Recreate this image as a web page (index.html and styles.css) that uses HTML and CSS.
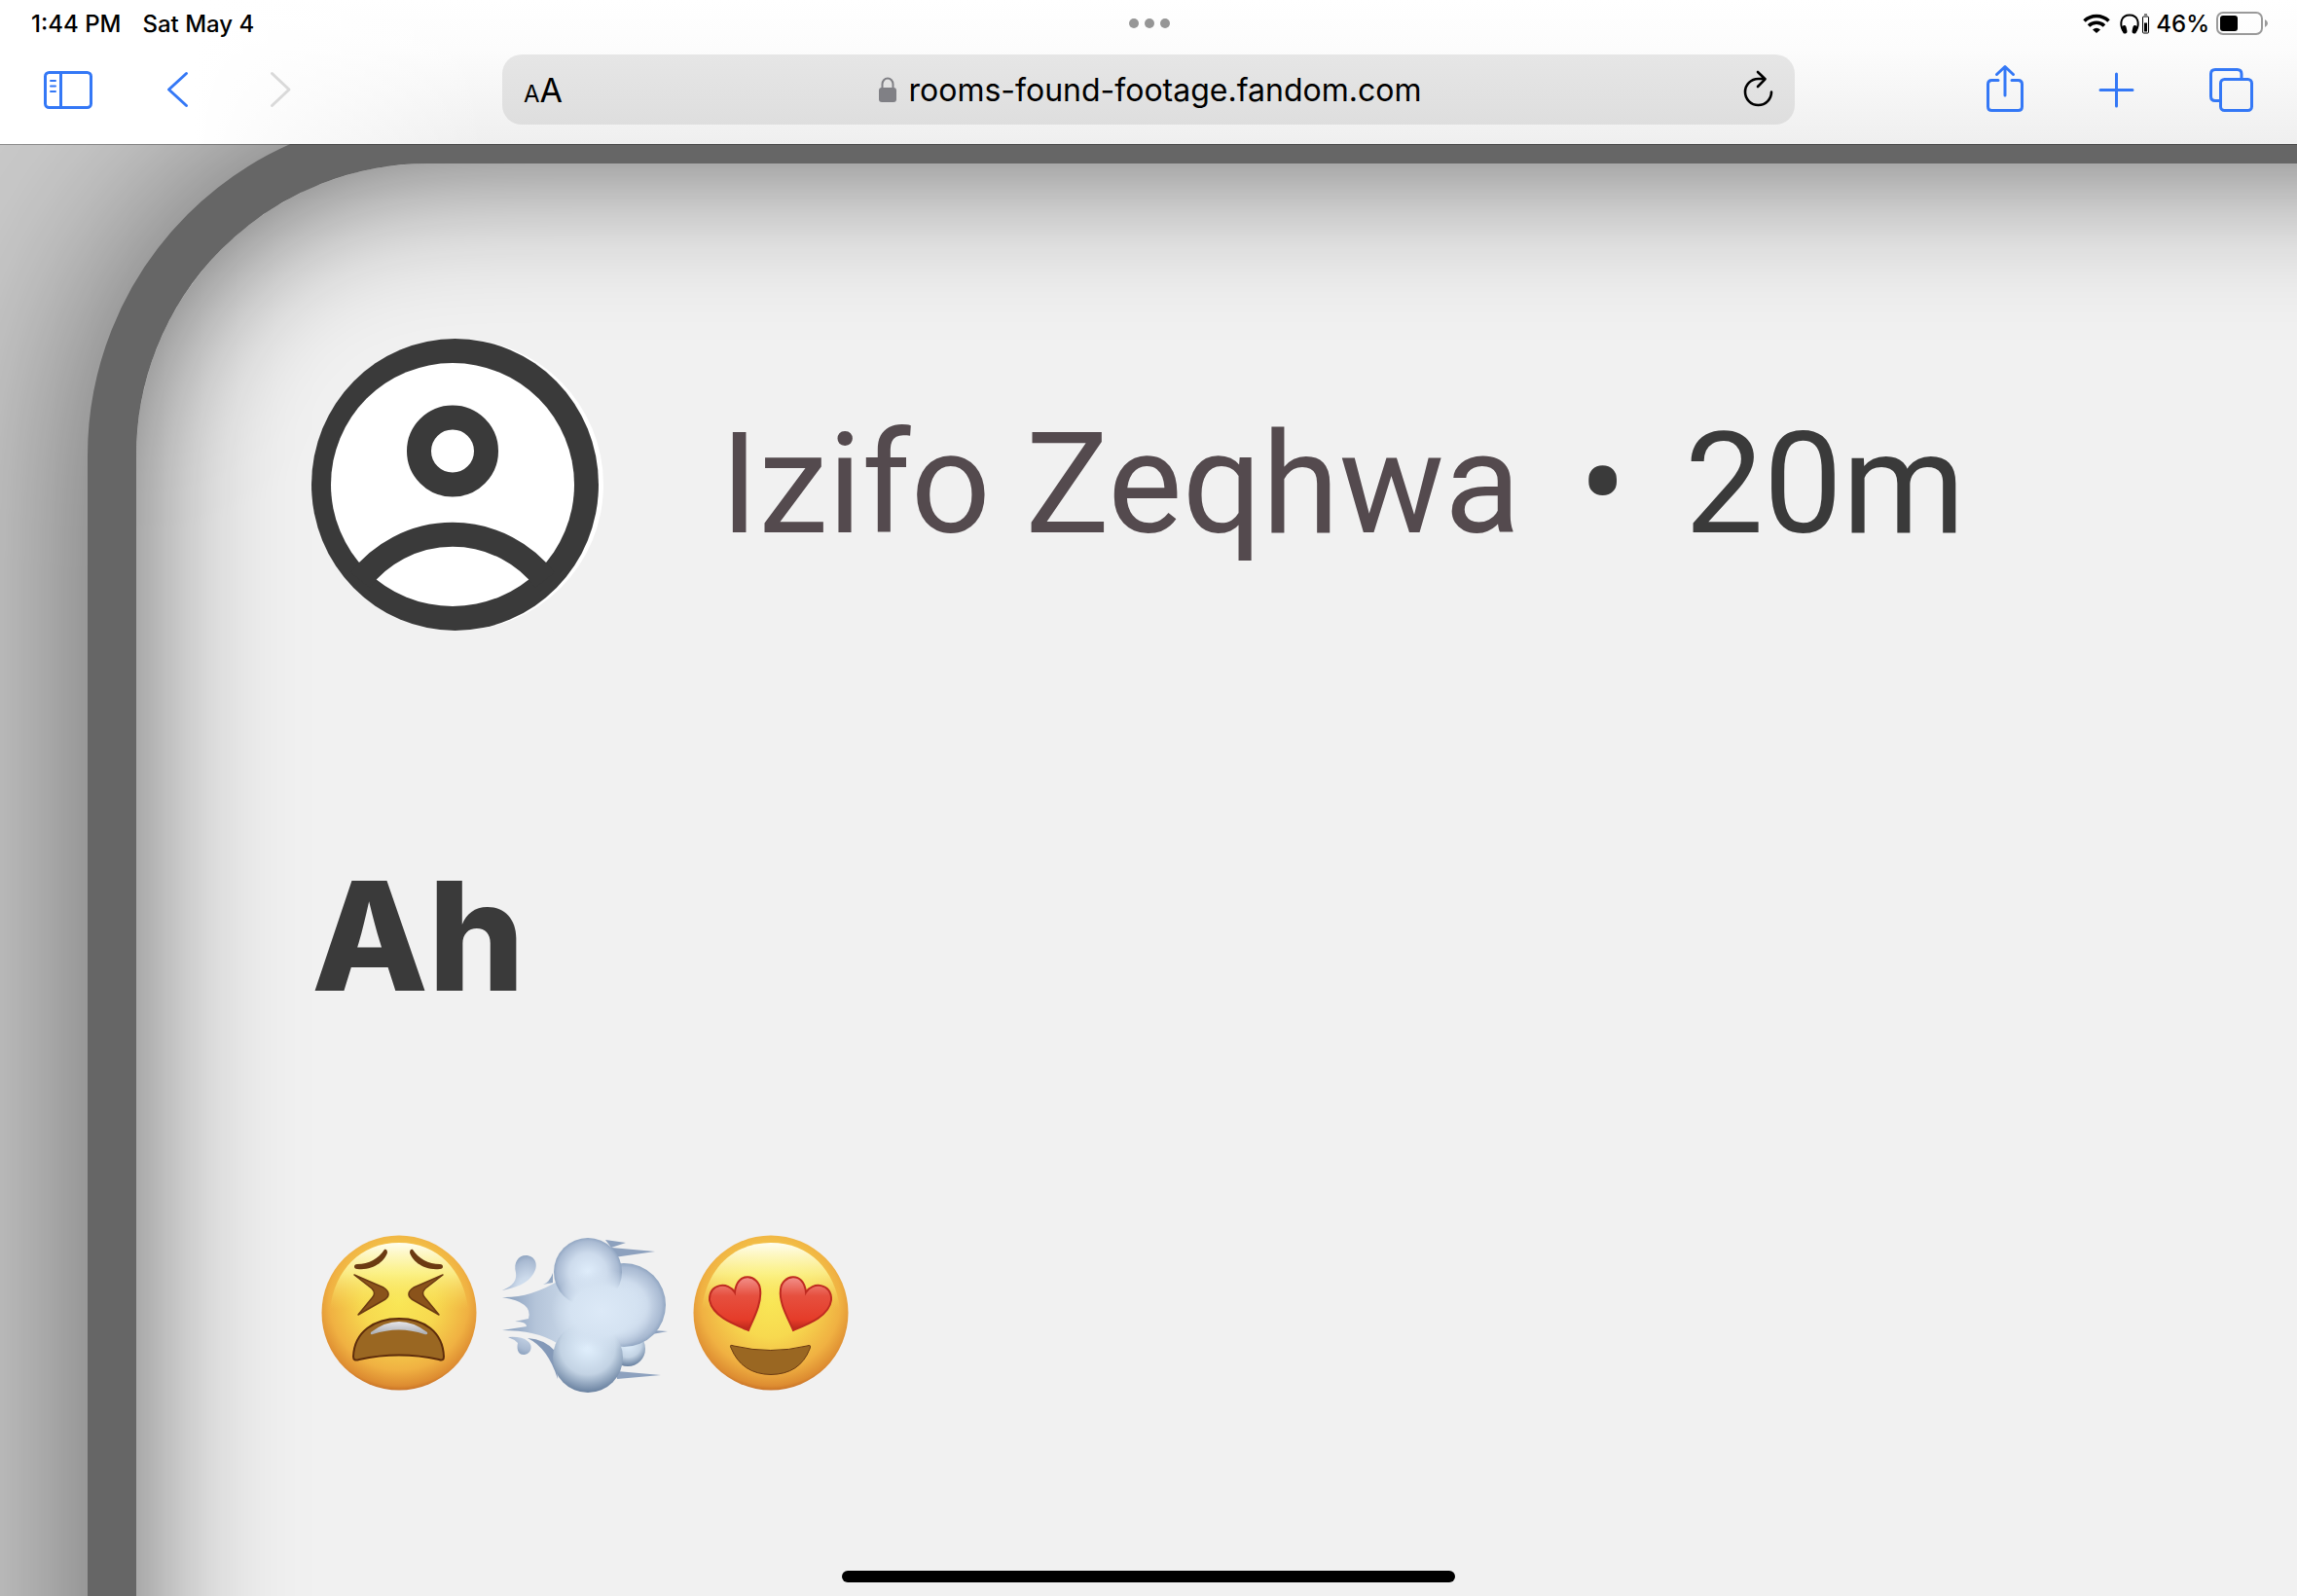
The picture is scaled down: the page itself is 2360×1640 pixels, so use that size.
FILE: index.html
```html
<!DOCTYPE html>
<html lang="en">
<head>
<meta charset="utf-8">
<title>rooms-found-footage.fandom.com</title>
<link rel="stylesheet" href="styles.css">
</head>
<body>
<header class="chrome">
  <div class="status">
    <div class="status-side">
      <span>1:44 PM</span>
      <span>Sat May 4</span>
    </div>
    <div class="dots" aria-hidden="true"><i></i><i></i><i></i></div>
    <div class="status-side status-right">
      <svg class="wifi" width="28" height="20" viewBox="0 0 28 20" aria-hidden="true">
        <g fill="none" stroke="#000" stroke-width="3.600">
          <path d="M1.500 7.500A18 18 0 0 1 26.500 7.500"/>
          <path d="M6 12.500A11.500 11.500 0 0 1 22 12.500"/>
        </g>
        <path d="M14 20L10 16.500Q14 13 18 16.500Z" fill="#000"/>
      </svg>
      <svg class="phones" width="31" height="21" viewBox="0 0 31 21" aria-hidden="true">
        <path d="M3.500 18C-1 10 1.500 1.500 10 1.500S21 10 16.500 18" fill="none" stroke="#000" stroke-width="2"/>
        <rect x="2.500" y="12" width="4.500" height="8.500" rx="2" transform="rotate(-12 5 16)"/>
        <rect x="13" y="12" width="4.500" height="8.500" rx="2" transform="rotate(12 15 16)"/>
        <rect x="23.500" y="3" width="6" height="17" rx="1" fill="none" stroke="#000"/>
        <path d="M25 9.500h3v9h-3zM25 .500h3v1h-3z"/>
      </svg>
      <span>46%</span>
      <svg class="battery" width="54" height="24" viewBox="0 0 54 24" aria-hidden="true">
        <rect x="2" y="1" width="46" height="22" rx="6" fill="none" stroke="#9a9a9a" stroke-width="2"/>
        <rect x="5" y="4" width="18" height="16" rx="3"/>
        <path d="M51 8q3 1.500 3 4t-3 4z" fill="#9a9a9a"/>
      </svg>
    </div>
  </div>
  <nav class="toolbar" aria-label="Browser">
    <div class="tools tools-left">
      <button class="tool" type="button" aria-label="Sidebar">
        <svg width="52" height="52" viewBox="0 0 52 52"><g class="line"><rect x="4.500" y="8.500" width="47" height="36" rx="4"/><path d="M20.500 9v35"/><path d="M10 17h5M10 22.500h5M10 28h5" stroke-width="2"/></g></svg>
      </button>
      <button class="tool" type="button" aria-label="Back">
        <svg width="52" height="52" viewBox="0 0 52 52"><path class="line" d="M37.500 9.500L19.500 26l18 16.500"/></svg>
      </button>
      <button class="tool" type="button" aria-label="Forward" disabled>
        <svg width="52" height="52" viewBox="0 0 52 52"><path class="line" d="M13.500 9.500l17.500 16.500-17.500 16.500"/></svg>
      </button>
    </div>
    <div class="address">
      <button class="reader" type="button" aria-label="Page settings"><span class="small-a">A</span>A</button>
      <div class="site">
        <svg width="20" height="27" viewBox="0 0 20 27" aria-hidden="true"><rect x="1" y="11" width="18" height="15" rx="3" fill="#808085"/><path d="M4.500 12V7.500a5.500 6 0 0 1 11 0V12" fill="none" stroke="#808085" stroke-width="2"/></svg>
        <a href="#post">rooms-found-footage.fandom.com</a>
      </div>
      <button class="reload" type="button" aria-label="Reload">
        <svg width="34" height="40" viewBox="0 0 34 40"><path d="M30 22.500a13.500 13.500 0 1 1-13.500-13.500h7M16 2l7.500 7.300-7.500 7.700" fill="none" stroke="#000" stroke-width="2.600" stroke-linecap="round" stroke-linejoin="round"/></svg>
      </button>
    </div>
    <div class="tools tools-right">
      <button class="tool" type="button" aria-label="Share">
        <svg width="52" height="52" viewBox="0 0 52 52"><path class="line" d="M19 16.500h-6.500q-4 0-4 4v23q0 4 4 4h27q4 0 4-4v-23q0-4-4-4H33M26 32V2.500M17.500 10.500l8.500-8 8.500 8"/></svg>
      </button>
      <button class="tool" type="button" aria-label="New tab">
        <svg width="52" height="52" viewBox="0 0 52 52"><path class="line" d="M24.500 10v33M8 26.500h33"/></svg>
      </button>
      <button class="tool" type="button" aria-label="Tabs">
        <svg width="52" height="52" viewBox="0 0 52 52"><g class="line"><rect x="15.500" y="15.500" width="32" height="32" rx="4"/><path d="M15 37.500h-5q-4.500 0-4.500-4.500V10q0-4.500 4.500-4.500h22.500q4.500 0 4.500 4.500v5"/></g></svg>
      </button>
    </div>
  </nav>
</header>
<main class="page">
  <article class="card" id="post">
    <header class="author">
      <svg class="avatar" width="300" height="300" viewBox="0 0 300 300" role="img" aria-label="Avatar">
        <circle cx="150" cy="150" r="150" fill="#fff"/>
        <ellipse cx="147.500" cy="150" rx="147.500" ry="150" fill="#3a3a3a"/>
        <circle cx="145" cy="150" r="125" fill="#fff"/>
        <circle cx="145" cy="115.500" r="34.500" fill="none" stroke="#3a3a3a" stroke-width="25"/>
        <path d="M50 248A120 120 0 0 1 240 248" fill="none" stroke="#3a3a3a" stroke-width="25"/>
      </svg>
      <a class="name" href="#post">Izifo Zeqhwa</a>
      <span class="dot">•</span>
      <time class="time">20m</time>
    </header>
    <h1 class="title">Ah</h1>
    <div class="emoji">
      <svg width="160" height="160" viewBox="0 0 160 160" role="img" aria-label="Tired face">
        <defs>
          <radialGradient id="face" cx=".5" cy=".42" r=".6"><stop offset="0" stop-color="#f9e756"/><stop offset=".4" stop-color="#f7d94f"/><stop offset=".75" stop-color="#f0b142"/><stop offset=".92" stop-color="#dd8c31"/><stop offset="1" stop-color="#bb611f"/></radialGradient>
          <linearGradient id="shine" x2="0" y2="1"><stop offset="0" stop-color="#fffef0"/><stop offset=".4" stop-color="#fcf692" stop-opacity=".8"/><stop offset=".85" stop-color="#f8e255" stop-opacity="0"/></linearGradient>
          <linearGradient id="teeth" x2="0" y2="1"><stop offset="0" stop-color="#e6e6ea"/><stop offset="1" stop-color="#a9abb1"/></linearGradient>
          <linearGradient id="heart" x2="0" y2="1"><stop offset="0" stop-color="#f2918b"/><stop offset=".35" stop-color="#e6503f"/><stop offset=".8" stop-color="#e53c29"/><stop offset="1" stop-color="#b9261a"/></linearGradient>
        </defs>
        <circle cx="80" cy="80" r="79.500" fill="url(#face)"/>
        <path d="M80 8C40 8 14 36 9 76 30 92 130 92 151 76 146 36 120 8 80 8Z" fill="url(#shine)"/>
        <g fill="#6b3a12">
          <path d="M65 15C59 24 49 30 37 30 33 30 33 35 37 35 54 37 66 26 68 18 68 15 66 14 65 15ZM94 15C100 24 110 30 122 30 126 30 126 35 122 35 105 37 93 26 91 18 91 15 93 14 94 15Z"/>
        </g>
        <path d="M34 41L64 54Q73 60 66 66L38 82 52 65Q57 60 52 55ZM125 41L95 54Q86 60 93 66L121 82 107 65Q102 60 107 55Z" fill="#8a531b" stroke="#6b3a12" stroke-width="1.500" stroke-linejoin="round"/>
        <path d="M33 125C34 99 55 86 80 86S125 99 126 125Q126 130 121 128 80 119 39 128 33 130 33 125Z" fill="#9a6722" stroke="#5d2c0b" stroke-width="2"/>
        <path d="M51 100Q80 78 109 100 110 103 106 102 80 93 53 102 50 103 51 100Z" fill="url(#teeth)"/>
      </svg>
      <svg width="170" height="163" viewBox="0 -3 170 163" role="img" aria-label="Dashing away">
        <defs>
          <radialGradient id="puff"><stop offset="0" stop-color="#dfedfb"/><stop offset=".55" stop-color="#cddbec"/><stop offset=".9" stop-color="#a9bad2"/><stop offset="1" stop-color="#91a6c2"/></radialGradient>
          <radialGradient id="puff-low" cy=".35" r=".65"><stop offset="0" stop-color="#e2f1fe"/><stop offset=".6" stop-color="#c3d3e4"/><stop offset="1" stop-color="#68809f"/></radialGradient>
          <radialGradient id="core"><stop offset="0" stop-color="#dce9f7"/><stop offset=".6" stop-color="#d5e3f2"/><stop offset="1" stop-color="#d0deee" stop-opacity="0"/></radialGradient>
          <linearGradient id="tail"><stop offset="0" stop-color="#839ab9"/><stop offset=".4" stop-color="#b4c4d9"/><stop offset="1" stop-color="#d2e0ef"/></linearGradient>
        </defs>
        <path d="M106 2l21 3-15 5ZM112 10l45 4-42 6ZM155 95l15 1-16 3ZM118 137l45 4-45 4Z" fill="#8da1be"/>
        <path d="M0 54C12 49 15 43 14 36 11 25 17 18 24 18 34 18 38 28 32 37 26 47 14 51 0 54ZM6 102Q20 101 26 106C33 111 29 120 22 120 15 120 15 112 16 108Q12 104 6 102ZM42 48Q49 45 52 36L52 46Z" fill="url(#puff)"/>
        <path d="M0 61Q28 62 58 44L85 62 78 95 56 108Q35 95 0 95L25 91Q25 86 13 86L27 83Q32 66 0 61Z" fill="url(#tail)"/>
        <path d="M26 103Q44 104 55 117L57 145Q47 113 26 103Z" fill="#8499b8"/>
        <circle cx="129" cy="114" r="18" fill="url(#puff-low)"/>
        <path d="M105 10Q118 17 122 28L112 40Z" fill="#a9bad2"/>
        <circle cx="125" cy="69" r="43" fill="url(#puff)"/>
        <circle cx="88" cy="35" r="35" fill="url(#puff)"/>
        <circle cx="88" cy="123" r="36" fill="url(#puff-low)"/>
        <ellipse cx="102" cy="75" rx="52" ry="43" fill="url(#core)"/>
      </svg>
      <svg width="160" height="160" viewBox="0 0 160 160" role="img" aria-label="Heart eyes">
        <circle cx="80" cy="80" r="79.500" fill="url(#face)"/>
        <path d="M80 8C40 8 14 36 9 76 30 92 130 92 151 76 146 36 120 8 80 8Z" fill="url(#shine)"/>
        <g fill="url(#heart)" stroke="#bf2a20" stroke-width="2">
          <path d="M57 98C40 91 20 83 17 67 16 49 37 48 43 59 45 36 68 41 69 56 71 70 62 86 57 98Z"/>
          <path d="M103 98C120 91 140 83 142 67 143 49 122 48 116 59 114 36 91 41 90 56 88 70 98 86 103 98Z"/>
        </g>
        <path d="M39 116Q37 112 42 114 80 123 117 114 122 112 120 117 110 143 80 143.500 50 143 39 116Z" fill="#9a6722" stroke="#6b3a12"/>
      </svg>
    </div>
  </article>
</main>
<div class="home-bar"></div>
</body>
</html>
```
FILE: styles.css
```css
* { box-sizing: border-box; }
body {
  margin: 0;
  height: 100vh;
  overflow: hidden;
  display: flex;
  flex-direction: column;
  background: #cacaca;
  color: #3a3a3a;
  font-family: Inter, "Liberation Sans", sans-serif;
}
a { color: inherit; text-decoration: none; }
button { border: 0; padding: 0; background: none; font: inherit; color: inherit; }
svg { display: block; flex: none; overflow: visible; }

.chrome {
  position: relative;
  z-index: 1;
  flex: none;
  color: #000;
  border-bottom: 1px solid rgba(0, 0, 0, 0.3);
  background: linear-gradient(90deg, #fff 200px, rgba(255, 255, 255, 0) 500px), linear-gradient(#fff, #fcfcfc 50px, #efefef);
  background-clip: padding-box;
  margin-bottom: -1px;
}
.status {
  display: grid;
  grid-template-columns: 1fr auto 1fr;
  align-items: center;
  height: 48px;
  padding: 0 30px 0 32px;
  font-size: 24px;
  font-weight: 500;
}
.status-side { display: flex; align-items: center; gap: 22px; }
.status-right { justify-content: flex-end; gap: 6px; }
.wifi { margin-right: 4px; }
.dots { display: flex; gap: 6px; }
.dots i { width: 10px; height: 10px; border-radius: 50%; background: #969696; }

.toolbar {
  display: grid;
  grid-template-columns: 1fr 1328px 1fr;
  height: 100px;
  padding: 8px 42px 20px;
}
.tools { display: flex; align-items: center; }
.tools-left { gap: 60px; }
.tools-right { justify-content: flex-end; gap: 64px; }
.tool { color: #3478f6; }
.tool:disabled { color: #d9d9d9; }
.line { fill: none; stroke: currentColor; stroke-width: 3; stroke-linecap: round; stroke-linejoin: round; }
.address {
  display: grid;
  grid-template-columns: 60px 1fr 60px;
  align-items: center;
  padding: 0 20px 0 22px;
  border-radius: 20px;
  background: linear-gradient(#e6e6e6, #dedede);
  font-size: 32px;
}
.reader { text-align: left; font-size: 34px; }
.small-a { font-size: 24px; }
.site { display: flex; justify-content: center; align-items: center; gap: 12px; }
.reload { justify-self: end; }

.page { flex: 1; min-height: 0; overflow: hidden; }
.card {
  position: relative;
  isolation: isolate;
  overflow: hidden;
  width: calc(100% + 800px);
  height: calc(100% + 800px);
  margin: -30px 0 0 90px;
  padding: 180px;
  border: 50px solid #666;
  border-radius: 350px;
  background: #f1f1f1;
  box-shadow: 0 0 200px rgba(0, 0, 0, 0.5);
}
/* soft shade along the inside of the frame */
.card::before {
  content: "";
  position: absolute;
  z-index: -1;
  inset: -300px;
  border: 300px solid rgba(0, 0, 0, 0.6);
  border-radius: 600px;
  filter: blur(78px);
}
.author {
  display: flex;
  align-items: center;
  font-family: Roboto, "Liberation Sans", sans-serif;
  font-size: 144px;
  line-height: 180px;
}
.avatar { margin-right: 120px; }
.name { color: #544a4e; }
.dot, .time { margin-left: 60px; }
.title {
  margin: 219px 0 0;
  font-size: 156px;
  line-height: 190px;
  font-weight: 800;
}
.emoji { display: flex; align-items: flex-start; gap: 26px; margin: 212px 10px 0; }
.home-bar {
  position: absolute;
  left: 50%;
  bottom: 14px;
  width: 630px;
  height: 12px;
  margin-left: -315px;
  border-radius: 6px;
  background: #000;
}
```
